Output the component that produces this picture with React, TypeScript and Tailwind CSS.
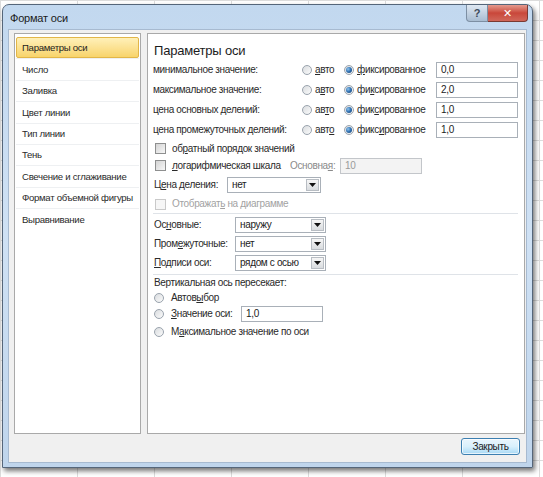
import React from 'react';

// label with a keyboard accelerator letter underlined
const acc = (text: string, i: number) => (
  <span className="whitespace-nowrap">
    {text.slice(0, i)}
    <span className="underline underline-offset-[1px] decoration-[1px]">{text[i]}</span>
    {text.slice(i + 1)}
  </span>
);

const Radio: React.FC<{ checked?: boolean }> = ({ checked }) => (
  <span className="flex h-[10px] w-[10px] shrink-0 items-center justify-center rounded-full border border-[#9aa3ad] bg-linear-to-br from-[#d9dcdf] to-[#fbfbfb]">
    {checked && (
      <span className="h-[6px] w-[6px] rounded-full bg-radial-[at_35%_35%] from-[#8fc4ee] via-[#2f6fb0] to-[#15406e]" />
    )}
  </span>
);

const Check: React.FC<{ disabled?: boolean }> = ({ disabled }) => (
  <span
    className={
      disabled
        ? 'h-[11px] w-[11px] shrink-0 border border-[#c9c9c9] bg-[#f6f6f6]'
        : 'h-[11px] w-[11px] shrink-0 border border-[#8e8f8f] bg-linear-to-br from-[#d4d4d4] to-[#f7f7f7]'
    }
  />
);

const Field: React.FC<{ value: string; className?: string; disabled?: boolean }> = ({
  value,
  className,
  disabled,
}) => (
  <div
    className={
      'flex h-[16px] shrink-0 items-center border px-[4px] ' +
      (disabled ? 'border-[#c3c6ca] bg-[#f3f3f3] text-[#9a9a9a] ' : 'border-[#a9b0b8] bg-white text-[#222] ') +
      (className ?? '')
    }
  >
    {value}
  </div>
);

const Select: React.FC<{ value: string; className: string }> = ({ value, className }) => (
  <div className={'flex h-[16px] shrink-0 items-stretch border border-[#a9b0b8] bg-white ' + className}>
    <span className="flex flex-1 items-center whitespace-nowrap px-[4px] text-[#222]">{value}</span>
    <span className="m-[1px] flex w-[13px] items-center justify-center border border-[#b8bdc3] bg-linear-to-b from-[#f6f6f6] to-[#d9dcdf]">
      <svg width="7" height="4" viewBox="0 0 7 4">
        <path d="M0 0h7L3.5 4z" fill="#111" />
      </svg>
    </span>
  </div>
);

const NAV = [
  'Параметры оси',
  'Число',
  'Заливка',
  'Цвет линии',
  'Тип линии',
  'Тень',
  'Свечение и сглаживание',
  'Формат объемной фигуры',
  'Выравнивание',
];

const AXIS_ROWS = [
  { label: 'минимальное значение:', a: 0, f: 0, value: '0,0' },
  { label: 'максимальное значение:', a: 1, f: 2, value: '2,0' },
  { label: 'цена основных делений:', a: 2, f: 3, value: '1,0' },
  { label: 'цена промежуточных делений:', a: 3, f: 4, value: '1,0' },
];

export default function App() {
  return (
    <div className="h-[477px] w-[543px] overflow-hidden bg-white bg-[linear-gradient(to_right,#dcdcdc_1px,transparent_1px),linear-gradient(to_bottom,#dcdcdc_1px,transparent_1px)] bg-size-[77px_20px] font-['Liberation_Sans',Arial,sans-serif] text-[10px] leading-none tracking-[-0.35px] text-[#2a2a2a]">
      <div className="ml-[2px] mt-[4px] flex h-[464px] w-[531px] flex-col rounded-t-[7px] border border-[#55667a] bg-linear-to-b from-[#c2d8ef] via-[#cfe1f4] to-[#bfd5ec] shadow-[2px_3px_5px_rgba(0,0,0,0.55)]">
        {/* Title bar */}
        <div className="flex h-[24px] items-start justify-between pl-[7px] pr-[4px]">
          <span className="mt-[8px] text-[11px] tracking-[-0.2px] text-[#1b1b1b]">Формат оси</span>
          <div className="flex">
            <span className="flex h-[17px] w-[22px] items-center justify-center rounded-bl-[4px] border border-t-0 border-[#7d8fa3] bg-linear-to-b from-[#dfe8f2] to-[#a9bdd2] text-[11px] font-bold text-[#3c4a5a]">
              ?
            </span>
            <span className="flex h-[17px] w-[40px] items-center justify-center rounded-br-[4px] border border-l-0 border-t-0 border-[#7a3a33] bg-linear-to-b from-[#e49a8e] via-[#c9473a] to-[#d0675a] font-['DejaVu_Sans',sans-serif] text-[11px] font-bold text-white">
              ✕
            </span>
          </div>
        </div>

        {/* Client area */}
        <div className="mx-[5px] mb-[4px] flex flex-1 flex-col border border-[#a7bad0] bg-[#f0f0f0]">
          <div className="flex gap-[6px] pl-[5px] pr-[1px] pt-[3px]">
            {/* Left navigation */}
            <div className="h-[401px] w-[127px] shrink-0 border border-[#a9a9a9] bg-white px-[1px] pt-[3px] text-[9.6px] tracking-[-0.3px]">
              {NAV.map((item, i) => (
                <div
                  key={item}
                  className={
                    i === 0
                      ? 'flex h-[21.4px] items-center whitespace-nowrap rounded-[2px] border border-[#e2b648] bg-linear-to-b from-[#fff0b8] to-[#f8d46a] pl-[5px] text-[#1d1d1d]'
                      : 'flex h-[21.4px] items-center whitespace-nowrap border-t border-[#eef0f2] pl-[6px]'
                  }
                >
                  {item}
                </div>
              ))}
            </div>

            {/* Right panel */}
            <div className="h-[401px] flex-1 border border-[#a9a9a9] bg-white pl-[5px] pr-[6px] pt-[6px]">
              <div className="flex h-[20px] items-center pl-[1px] text-[13px] tracking-[-0.2px] text-[#1b1b1b]">
                Параметры оси
              </div>

              {AXIS_ROWS.map((r) => (
                <div key={r.label} className="flex h-[20px] items-center">
                  <span className="w-[149px] shrink-0 whitespace-nowrap">{r.label}</span>
                  <span className="flex w-[42px] shrink-0 items-center gap-[3px]">
                    <Radio />
                    {acc('авто', r.a)}
                  </span>
                  <span className="flex w-[92px] shrink-0 items-center gap-[3px]">
                    <Radio checked />
                    {acc('фиксированное', r.f)}
                  </span>
                  <Field value={r.value} className="w-[82px]" />
                </div>
              ))}

              <div className="flex h-[17px] items-center gap-[6px] pl-[2px]">
                <Check />
                {acc('обратный порядок значений', 2)}
              </div>
              <div className="flex h-[17px] items-center pl-[2px]">
                <Check />
                <span className="ml-[6px] w-[118px] shrink-0">{acc('логарифмическая шкала', 0)}</span>
                <span className="w-[50px] shrink-0 text-[#8a8a8a]">{acc('Основная:', 7)}</span>
                <Field value="10" disabled className="w-[82px]" />
              </div>
              <div className="flex h-[21px] items-center pl-[1px]">
                <span className="w-[73px] shrink-0">{acc('Цена деления:', 1)}</span>
                <Select value="нет" className="w-[94px]" />
              </div>
              <div className="flex h-[18px] items-center gap-[6px] pl-[2px] text-[#a2a2a2]">
                <Check disabled />
                {acc('Отображать на диаграмме', 9)}
              </div>

              <div className="mb-[1px] border-t border-[#dfe3e8]" />

              <div className="flex h-[19px] items-center pl-[1px]">
                <span className="w-[81px] shrink-0">{acc('Основные:', 2)}</span>
                <Select value="наружу" className="w-[91px]" />
              </div>
              <div className="flex h-[19px] items-center pl-[1px]">
                <span className="w-[81px] shrink-0">{acc('Промежуточные:', 4)}</span>
                <Select value="нет" className="w-[91px]" />
              </div>
              <div className="flex h-[19px] items-center pl-[1px]">
                <span className="w-[81px] shrink-0">{acc('Подписи оси:', 0)}</span>
                <Select value="рядом с осью" className="w-[91px]" />
              </div>

              <div className="mt-[2px] border-t border-[#dfe3e8]" />

              <div className="flex h-[16px] items-center pl-[1px]">Вертикальная ось пересекает:</div>
              <div className="flex h-[14px] items-center gap-[7px] pl-[1px]">
                <Radio />
                {acc('Автовыбор', 5)}
              </div>
              <div className="flex h-[18px] items-center pl-[1px]">
                <Radio />
                <span className="ml-[7px] w-[70px] shrink-0">{acc('Значение оси:', 0)}</span>
                <Field value="1,0" className="w-[82px]" />
              </div>
              <div className="flex h-[18px] items-center gap-[7px] pl-[1px]">
                <Radio />
                {acc('Максимальное значение по оси', 1)}
              </div>
            </div>
          </div>

          {/* Footer */}
          <div className="flex justify-end pr-[6px] pt-[4px]">
            <button className="flex h-[17px] w-[59px] items-center justify-center rounded-[3px] border border-[#3c7fb1] bg-linear-to-b from-[#eaf6fd] via-[#d9f0fc] to-[#a7d9f5] text-[10px] text-[#1b1b1b] shadow-[inset_0_0_0_1px_rgba(255,255,255,0.7)]">
              Закрыть
            </button>
          </div>
        </div>
      </div>
    </div>
  );
}
